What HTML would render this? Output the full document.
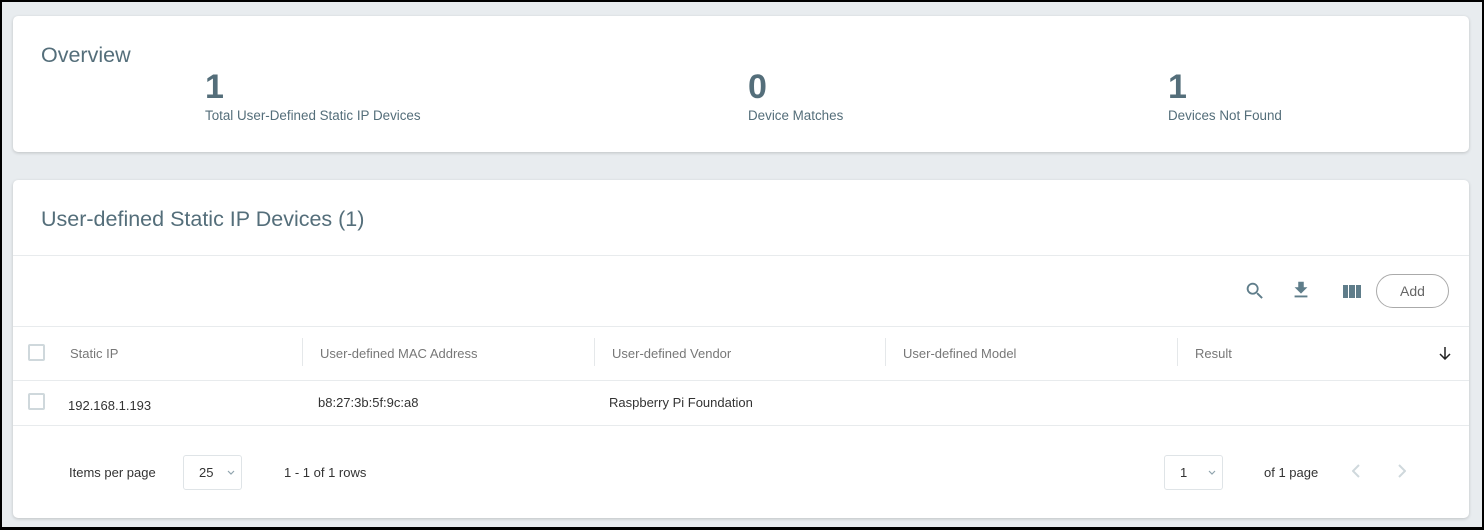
<!DOCTYPE html><html><head><style>
*{box-sizing:border-box;margin:0;padding:0}
body{width:1484px;height:530px;background:#000;font-family:"Liberation Sans",sans-serif;overflow:hidden;position:relative}
.bg{position:absolute;left:2px;top:2px;width:1480px;height:525px;background:#e8ecef}
.card{position:absolute;left:13px;width:1456px;background:#fff;border-radius:5px;box-shadow:0 1px 3px rgba(0,0,0,.18)}
.t{position:absolute;color:#546e7a;white-space:nowrap}
.s{position:absolute;white-space:nowrap;font-size:13px;color:#333}
.h{position:absolute;font-size:13px;color:#777;white-space:nowrap}
.cb{position:absolute;width:17px;height:17px;border:2px solid #cfd8dc;border-radius:2px}
.sep{position:absolute;top:12px;width:1px;height:28px;background:#e5e8ea}
.sel{position:absolute;border:1px solid #dfe4e7;border-radius:3px;height:35px;width:59px}
</style></head><body>
<div class="bg"></div>
<div class="card" style="top:16px;height:136px">
<div class="t" style="left:28px;top:27px;font-size:21.5px">Overview</div>
<div class="t" style="left:192px;top:52px;font-size:34px;font-weight:bold">1</div>
<div class="t" style="left:192px;top:92px;font-size:13.4px">Total User-Defined Static IP Devices</div>
<div class="t" style="left:735px;top:52px;font-size:34px;font-weight:bold">0</div>
<div class="t" style="left:735px;top:92px;font-size:13.4px">Device Matches</div>
<div class="t" style="left:1155px;top:52px;font-size:34px;font-weight:bold">1</div>
<div class="t" style="left:1155px;top:92px;font-size:13.4px">Devices Not Found</div>
</div>
<div class="card" style="top:180px;height:338px">
<div class="t" style="left:28px;top:27px;font-size:21.5px">User-defined Static IP Devices (1)</div>
<div style="position:absolute;left:0;top:75px;width:100%;height:1px;background:#e8ebed"></div>
<svg style="position:absolute;left:1231px;top:100px" width="22" height="22" viewBox="0 0 24 24"><path fill="#5f7d8a" d="M15.5 14h-.8l-.3-.3A6.5 6.5 0 1 0 9.5 16a6.5 6.5 0 0 0 4.2-1.6l.3.3v.8l5 5 1.5-1.5-5-5zm-6 0a4.5 4.5 0 1 1 0-9 4.5 4.5 0 0 1 0 9z"/></svg>
<svg style="position:absolute;left:1277px;top:99px" width="22" height="22" viewBox="0 0 24 24"><path fill="#5f7d8a" d="M19 9h-4V3H9v6H5l7 7 7-7zM5 18v2h14v-2H5z"/></svg>
<div style="position:absolute;left:1330px;top:105px;width:18px;height:13px;display:flex;gap:1px"><i style="flex:1;background:#5f7d8a"></i><i style="flex:1;background:#5f7d8a"></i><i style="flex:1;background:#5f7d8a"></i></div>
<div style="position:absolute;left:1363px;top:94px;width:73px;height:34px;border:1px solid #aaa;border-radius:17px;text-align:center;line-height:32px;font-size:14px;color:#666">Add</div>
<div style="position:absolute;left:0;top:146px;width:100%;height:1px;background:#e8ebed"></div>
<div style="position:absolute;left:0;top:146px;width:100%;height:54px">
<div class="cb" style="left:15px;top:18px"></div>
<div class="h" style="left:57px;top:20px">Static IP</div>
<div class="sep" style="left:289px"></div><div class="h" style="left:307px;top:20px">User-defined MAC Address</div>
<div class="sep" style="left:581px"></div><div class="h" style="left:599px;top:20px">User-defined Vendor</div>
<div class="sep" style="left:872px"></div><div class="h" style="left:890px;top:20px">User-defined Model</div>
<div class="sep" style="left:1164px"></div><div class="h" style="left:1182px;top:20px">Result</div>
<svg style="position:absolute;left:1426px;top:20px" width="12" height="14" viewBox="0 0 12 14"><path d="M6 1v12M1 8l5 5 5-5" stroke="#222" stroke-width="1.5" fill="none"/></svg>
</div>
<div style="position:absolute;left:0;top:200px;width:100%;height:1px;background:#e8ebed"></div>
<div class="cb" style="left:15px;top:213px"></div>
<div class="s" style="left:55px;top:218px">192.168.1.193</div>
<div class="s" style="left:305px;top:215px">b8:27:3b:5f:9c:a8</div>
<div class="s" style="left:596px;top:215px">Raspberry Pi Foundation</div>
<div style="position:absolute;left:0;top:245px;width:100%;height:1px;background:#e8ebed"></div>
<div class="s" style="left:56px;top:285px">Items per page</div>
<div class="sel" style="left:170px;top:275px"><span class="s" style="left:15px;top:9px">25</span><svg style="position:absolute;left:43px;top:14px" width="8" height="6" viewBox="0 0 8 6"><path d="M1 1l3 3 3-3" stroke="#90a4ae" stroke-width="1.2" fill="none"/></svg></div>
<div class="s" style="left:271px;top:285px">1 - 1 of 1 rows</div>
<div class="sel" style="left:1151px;top:275px"><span class="s" style="left:15px;top:9px">1</span><svg style="position:absolute;left:43px;top:14px" width="8" height="6" viewBox="0 0 8 6"><path d="M1 1l3 3 3-3" stroke="#90a4ae" stroke-width="1.2" fill="none"/></svg></div>
<div class="s" style="left:1251px;top:285px">of 1 page</div>
<svg style="position:absolute;left:1339px;top:284px" width="8" height="14" viewBox="0 0 8 14"><path d="M7 1L1 7l6 6" stroke="#cfd8dc" stroke-width="2" fill="none"/></svg>
<svg style="position:absolute;left:1385px;top:284px" width="8" height="14" viewBox="0 0 8 14"><path d="M1 1l6 6-6 6" stroke="#cfd8dc" stroke-width="2" fill="none"/></svg>
</div>
</body></html>
